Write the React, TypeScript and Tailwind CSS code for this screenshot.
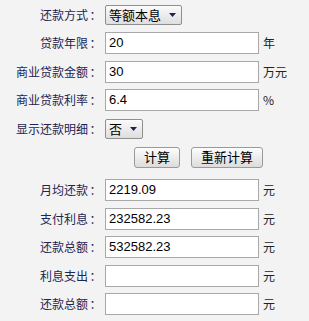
const cjk = "font-['Noto_Sans_CJK_SC','Liberation_Sans',sans-serif]";

function Label({ text }: { text: string }) {
  return (
    <div className={`flex w-[96px] shrink-0 justify-end whitespace-nowrap text-[12px] text-[#1c2552] ${cjk}`}>
      <span>{text}</span>
      <span className="inline-block w-[8px] pl-[1.5px]">：</span>
    </div>
  );
}

function Field({ value, unit }: { value: string; unit?: string }) {
  return (
    <div className="ml-[9px] flex items-center">
      <div className="flex h-[22px] w-[154px] items-center border border-[#a8a8a8] bg-white pl-[3px] font-['Liberation_Sans',sans-serif] text-[13px] text-black">
        {value}
      </div>
      {unit && <span className={`ml-[4px] text-[12px] text-[#222] ${cjk}`}>{unit}</span>}
    </div>
  );
}

function Select({ value, width }: { value: string; width: string }) {
  return (
    <div
      className={`ml-[9px] flex h-[20px] ${width} items-center justify-between rounded-[2px] border border-[#8f8f8f] bg-gradient-to-b from-[#fbfbfb] to-[#dedede] pl-[3px] pr-[5px] text-[13px] text-black ${cjk}`}
    >
      <span className="leading-none">{value}</span>
      <svg width="7" height="4" viewBox="0 0 7 4">
        <path d="M0 0h7L3.5 4z" fill="#1f2255" />
      </svg>
    </div>
  );
}

function Button({ text, width }: { text: string; width: string }) {
  return (
    <div
      className={`flex h-[21px] ${width} items-center justify-center rounded-[3px] border border-[#9a9a9a] bg-gradient-to-b from-[#fdfdfd] to-[#dcdcdc] text-[13px] text-black ${cjk}`}
    >
      {text}
    </div>
  );
}

const Row = ({ children }: { children: React.ReactNode }) => (
  <div className="flex h-[28.5px] items-center">{children}</div>
);

export default function App() {
  return (
    <div className="h-[321px] w-[309px] bg-[#f3f3f3] pt-[0.25px]">
      <Row>
        <Label text="还款方式" />
        <Select value="等额本息" width="w-[77px]" />
      </Row>
      <Row>
        <Label text="贷款年限" />
        <Field value="20" unit="年" />
      </Row>
      <Row>
        <Label text="商业贷款金额" />
        <Field value="30" unit="万元" />
      </Row>
      <Row>
        <Label text="商业贷款利率" />
        <Field value="6.4" unit="%" />
      </Row>
      <Row>
        <Label text="显示还款明细" />
        <Select value="否" width="w-[38px]" />
      </Row>
      <div className="mb-[4.5px] flex h-[28.5px] items-center gap-[11px] pl-[134px]">
        <Button text="计算" width="w-[46px]" />
        <Button text="重新计算" width="w-[72px]" />
      </div>
      <Row>
        <Label text="月均还款" />
        <Field value="2219.09" unit="元" />
      </Row>
      <Row>
        <Label text="支付利息" />
        <Field value="232582.23" unit="元" />
      </Row>
      <Row>
        <Label text="还款总额" />
        <Field value="532582.23" unit="元" />
      </Row>
      <Row>
        <Label text="利息支出" />
        <Field value="" unit="元" />
      </Row>
      <Row>
        <Label text="还款总额" />
        <Field value="" unit="元" />
      </Row>
    </div>
  );
}
